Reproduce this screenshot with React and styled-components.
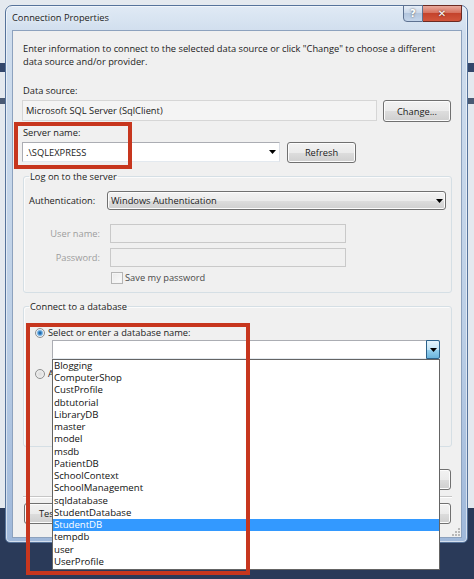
import React from 'react';
import styled, { createGlobalStyle } from 'styled-components';

const UI_FONT = `"Open Sans", "Noto Sans", sans-serif`;

const GlobalStyle = createGlobalStyle`
  html, body { margin: 0; padding: 0; }
  body { font-family: ${UI_FONT}; }
`;

// desktop behind the dialog (bits of the IDE window show at the edges)
const Desktop = styled.div`
  position: relative;
  width: 474px;
  height: 579px;
  overflow: hidden;
  box-sizing: border-box;
  padding: 5px 0 0 5px;
  font-family: ${UI_FONT};
  font-size: 9.3px;
  color: #1b1b1b;
  background: linear-gradient(
    to bottom,
    #e4e9ef 0,
    #e4e9ef 63px,
    #34476b 63px,
    #34476b 72px,
    #e4e9ef 72px,
    #e4e9ef 98px,
    #4a5a74 98px,
    #4a5a74 104px,
    #e4e9ef 104px,
    #e4e9ef 508px,
    #2a3a59 508px
  );
`;

const Window = styled.div`
  width: 463px;
  height: 538px;
  box-sizing: border-box;
  display: flex;
  flex-direction: column;
  border: 1px solid #56739b;
  border-radius: 7px 7px 5px 5px;
  background: linear-gradient(to bottom, #e0eaf5 0, #cfdded 28px, #bccfe6 60%, #9fb8da 100%);
  box-shadow: inset 0 0 0 1px rgba(255, 255, 255, 0.55);
`;

const TitleBar = styled.div`
  height: 24px;
  display: flex;
  align-items: flex-start;
  padding-left: 6px;
`;

const Title = styled.div`
  line-height: 23px;
  font-size: 9.3px;
  color: #222;
  text-shadow: 0 0 6px #fff;
`;

const CaptionButtons = styled.div`
  display: flex;
  margin: -1px 5px 0 auto;
`;

const CaptionButton = styled.div`
  height: 17px;
  width: ${(p) => (p.$close ? 39 : 20)}px;
  box-sizing: border-box;
  display: flex;
  align-items: center;
  justify-content: center;
  border: 1px solid ${(p) => (p.$close ? '#6b2a22' : '#5d7190')};
  border-left-width: ${(p) => (p.$close ? 0 : 1)}px;
  border-radius: ${(p) => (p.$close ? '0 0 4px 0' : '0 0 0 4px')};
  background: ${(p) =>
    p.$close
      ? 'linear-gradient(to bottom, #e9a99c 0, #d7725f 45%, #c4432c 50%, #d2553b 100%)'
      : 'linear-gradient(to bottom, #e7eef7 0, #cad8ea 45%, #b3c6de 50%, #c4d5ea 100%)'};
  color: #fff;
  font-family: "DejaVu Sans", sans-serif;
  font-weight: bold;
  font-size: 10px;
  text-shadow: 0 0 2px rgba(0, 0, 0, 0.7);
`;

const Client = styled.div`
  position: relative;
  flex: 1;
  margin: 0 5px 4px 6px;
  box-sizing: border-box;
  display: flex;
  flex-direction: column;
  align-items: flex-start;
  padding: 0 10px 0 9px;
  background: #f0f0f0;
  border: 1px solid #8da2be;
`;

const Intro = styled.p`
  margin: 11px 0 0 1px;
  line-height: 13px;
`;

const Label = styled.div`
  margin-top: ${(p) => p.$top || 0}px;
  padding-left: 1px;
  line-height: 13px;
  white-space: nowrap;
`;

const Row = styled.div`
  display: flex;
  align-items: ${(p) => p.$align || 'flex-start'};
  justify-content: ${(p) => p.$justify || 'flex-start'};
  gap: ${(p) => p.$gap || 0}px;
  margin-top: ${(p) => p.$top || 0}px;
  margin-left: ${(p) => p.$left || 0}px;
  width: ${(p) => (p.$stretch ? '100%' : 'auto')};
`;

const TextBox = styled.div`
  width: ${(p) => p.$w}px;
  height: ${(p) => p.$h || 19}px;
  box-sizing: border-box;
  display: flex;
  align-items: center;
  padding-left: 3px;
  background: ${(p) => (p.$disabled ? '#f0f0f0' : '#f4f4f4')};
  border: 1px solid ${(p) => (p.$disabled ? '#c9c9c9' : '#d6d6d6')};
  white-space: nowrap;
`;

const Button = styled.div`
  width: ${(p) => p.$w}px;
  height: ${(p) => p.$h || 21}px;
  box-sizing: border-box;
  display: flex;
  align-items: center;
  justify-content: center;
  margin-left: ${(p) => p.$left || 0}px;
  margin-right: ${(p) => (p.$pushRight ? 'auto' : '0')};
  border: 1px solid #707070;
  border-radius: 3px;
  background: linear-gradient(to bottom, #f2f2f2 0, #ebebeb 50%, #dddddd 51%, #cfcfcf 100%);
  box-shadow: inset 0 0 0 1px #fcfcfc;
  white-space: nowrap;
`;

const Combo = styled.div`
  position: relative;
  width: ${(p) => p.$w}px;
  height: ${(p) => p.$h || 19}px;
  box-sizing: border-box;
  display: flex;
  align-items: center;
  padding-left: 3px;
  background: #fff;
  border: 1px solid #abadb3;
  border-bottom-color: #e3e9ef;
  border-right-color: #dbdfe6;
  white-space: nowrap;
`;

// read-only drop-down list looks like a button on Win7
const DropList = styled(Combo)`
  border: 1px solid #707070;
  border-radius: 3px;
  background: linear-gradient(to bottom, #f2f2f2 0, #ebebeb 50%, #dddddd 51%, #cfcfcf 100%);
  box-shadow: inset 0 0 0 1px #fcfcfc;
`;

const ArrowSlot = styled.div`
  margin-left: auto;
  margin-right: ${(p) => p.$right || 4}px;
  display: flex;
  align-items: center;
`;

const PressedDrop = styled.div`
  margin: -1px -1px -1px auto;
  width: 14px;
  align-self: stretch;
  box-sizing: border-box;
  display: flex;
  align-items: center;
  justify-content: center;
  border: 1px solid #2c628b;
  border-radius: 0 2px 2px 0;
  background: linear-gradient(to bottom, #e5f4fc 0, #c4e5f6 50%, #98d1ef 51%, #6ab4dc 100%);
`;

const Arrow = () => (
  <svg width="7" height="4" viewBox="0 0 7 4">
    <polygon points="0,0 7,0 3.5,4" fill="#000" />
  </svg>
);

const Group = styled.fieldset`
  margin: 7px 0 0 1px;
  width: 429px;
  box-sizing: border-box;
  border: 1px solid #d5dfe5;
  border-radius: 3px;
  box-shadow: inset 1px 1px 0 #fbfbfb;
  padding: ${(p) => p.$pt}px 5px ${(p) => p.$pb}px 5px;
  min-width: 0;
`;

const Legend = styled.legend`
  padding: 0 1px;
  line-height: 13px;
`;

const FieldLabel = styled.div`
  width: ${(p) => p.$w}px;
  flex-shrink: 0;
  text-align: ${(p) => (p.$right ? 'right' : 'left')};
  color: ${(p) => (p.$disabled ? '#9d9d9d' : p.$muted ? '#4a4a4a' : 'inherit')};
  line-height: 13px;
  white-space: nowrap;
`;

const CheckBox = styled.div`
  width: 12px;
  height: 12px;
  box-sizing: border-box;
  border: 1px solid #b5b5b5;
  background: linear-gradient(135deg, #e9e9e9 0, #fbfbfb 100%);
  box-shadow: inset 0 0 0 1px #f4f4f4;
`;

const Radio = styled.div`
  width: 10px;
  height: 10px;
  box-sizing: border-box;
  border-radius: 50%;
  border: 1px solid #8e8f8f;
  background: ${(p) =>
    p.$checked
      ? 'radial-gradient(circle, #1a4f80 0, #3d8cd0 1.6px, #a8cde9 3px, #e6eef6 3.4px, #f4f4f4 100%)'
      : 'radial-gradient(circle, #dcdcdc 0, #f6f6f6 100%)'};
`;

const ComboWrap = styled.div`
  position: relative;
  margin: ${(p) => p.$top || 0}px 0 0 23px;
  z-index: 2;
`;

const DropDown = styled.ul`
  position: absolute;
  top: 100%;
  left: 0;
  width: 388px;
  height: 211px;
  box-sizing: border-box;
  margin: 0;
  padding: 0;
  list-style: none;
  background: #fff;
  border: 1px solid #646464;
`;

const Item = styled.li`
  height: 12.24px;
  line-height: 12.24px;
  padding-left: 1px;
  font-size: 9.6px;
  white-space: nowrap;
  background: ${(p) => (p.$selected ? '#3399ff' : 'transparent')};
  color: ${(p) => (p.$selected ? '#fff' : '#111')};
`;

const Separator = styled.div`
  margin: 6px 0 0 1px;
  width: 429px;
  height: 1px;
  background: #c6c6c6;
  box-shadow: 0 1px 0 #fff;
`;

const Grip = styled.svg`
  position: absolute;
  right: 1px;
  bottom: 1px;
`;

// hand-drawn annotation boxes lying over the screenshot
const Highlight = styled.div`
  position: absolute;
  left: ${(p) => p.$x}px;
  top: ${(p) => p.$y}px;
  width: ${(p) => p.$w}px;
  height: ${(p) => p.$h}px;
  box-sizing: border-box;
  border: 4px solid #c7361e;
  z-index: 5;
  pointer-events: none;
`;

const databases = [
  'Blogging',
  'ComputerShop',
  'CustProfile',
  'dbtutorial',
  'LibraryDB',
  'master',
  'model',
  'msdb',
  'PatientDB',
  'SchoolContext',
  'SchoolManagement',
  'sqldatabase',
  'StudentDatabase',
  'StudentDB',
  'tempdb',
  'user',
  'UserProfile',
];

const gripDots = [
  [6, 0],
  [6, 3],
  [3, 3],
  [6, 6],
  [3, 6],
  [0, 6],
];

export default function App() {
  return (
    <>
      <GlobalStyle />
      <Desktop>
        <Window>
          <TitleBar>
            <Title>Connection Properties</Title>
            <CaptionButtons>
              <CaptionButton>?</CaptionButton>
              <CaptionButton $close>✕</CaptionButton>
            </CaptionButtons>
          </TitleBar>

          <Client>
            <Intro>
              Enter information to connect to the selected data source or click "Change" to choose a different
              <br />
              data source and/or provider.
            </Intro>

            <Label $top={16}>Data source:</Label>
            <Row $top={3} $gap={6}>
              <TextBox $w={355} $h={21}>Microsoft SQL Server (SqlClient)</TextBox>
              <Button $w={68} $h={22}>Change...</Button>
            </Row>

            <Label $top={4}>Server name:</Label>
            <Row $top={3} $gap={7}>
              <Combo $w={258} $h={20}>
                .\SQLEXPRESS
                <ArrowSlot $right={3}>
                  <Arrow />
                </ArrowSlot>
              </Combo>
              <Button $w={69}>Refresh</Button>
            </Row>

            <Group $pt={8} $pb={8}>
              <Legend>Log on to the server</Legend>
              <Row $align="center">
                <FieldLabel $w={78}>Authentication:</FieldLabel>
                <DropList $w={339}>
                  Windows Authentication
                  <ArrowSlot $right={2}>
                    <Arrow />
                  </ArrowSlot>
                </DropList>
              </Row>
              <Row $top={14} $align="center" $gap={10}>
                <FieldLabel $w={71} $right $disabled>User name:</FieldLabel>
                <TextBox $w={236} $disabled />
              </Row>
              <Row $top={5} $align="center" $gap={10}>
                <FieldLabel $w={71} $right $disabled>Password:</FieldLabel>
                <TextBox $w={236} $disabled />
              </Row>
              <Row $top={4} $left={82} $align="center" $gap={2}>
                <CheckBox />
                <FieldLabel $w={120} $muted>Save my password</FieldLabel>
              </Row>
            </Group>

            <Group $pt={13} $pb={4}>
              <Legend>Connect to a database</Legend>
              <Row $left={6} $align="center" $gap={3}>
                <Radio $checked />
                <FieldLabel $w={200}>Select or enter a database name:</FieldLabel>
              </Row>
              <ComboWrap $top={1}>
                <Combo $w={388} $h={19}>
                  <PressedDrop>
                    <Arrow />
                  </PressedDrop>
                </Combo>
                <DropDown>
                  {databases.map((db) => (
                    <Item key={db} $selected={db === 'StudentDB'}>
                      {db}
                    </Item>
                  ))}
                </DropDown>
              </ComboWrap>
              <Row $top={8} $left={6} $align="center" $gap={3}>
                <Radio />
                <FieldLabel $w={200}>Attach a database file:</FieldLabel>
              </Row>
              <Row $top={3} $left={23}>
                <TextBox $w={300} $disabled />
              </Row>
              <Row $top={21} $left={23}>
                <TextBox $w={300} $disabled />
              </Row>
            </Group>

            <Row $top={22} $stretch $justify="flex-end">
              <Button $w={75}>Advanced...</Button>
            </Row>

            <Separator />

            <Row $top={6} $stretch $gap={6}>
              <Button $w={100} $left={2} $pushRight>
                Test Connection
              </Button>
              <Button $w={75}>OK</Button>
              <Button $w={75}>Cancel</Button>
            </Row>

            <Grip width="8" height="8" viewBox="0 0 8 8">
              {gripDots.map(([x, y]) => (
                <rect key={`${x}-${y}`} x={x} y={y} width="2" height="2" fill="#b8b8b8" />
              ))}
            </Grip>
          </Client>
        </Window>

        <Highlight $x={14} $y={122} $w={118} $h={47} />
        <Highlight $x={26} $y={323} $w={224} $h={252} />
      </Desktop>
    </>
  );
}
